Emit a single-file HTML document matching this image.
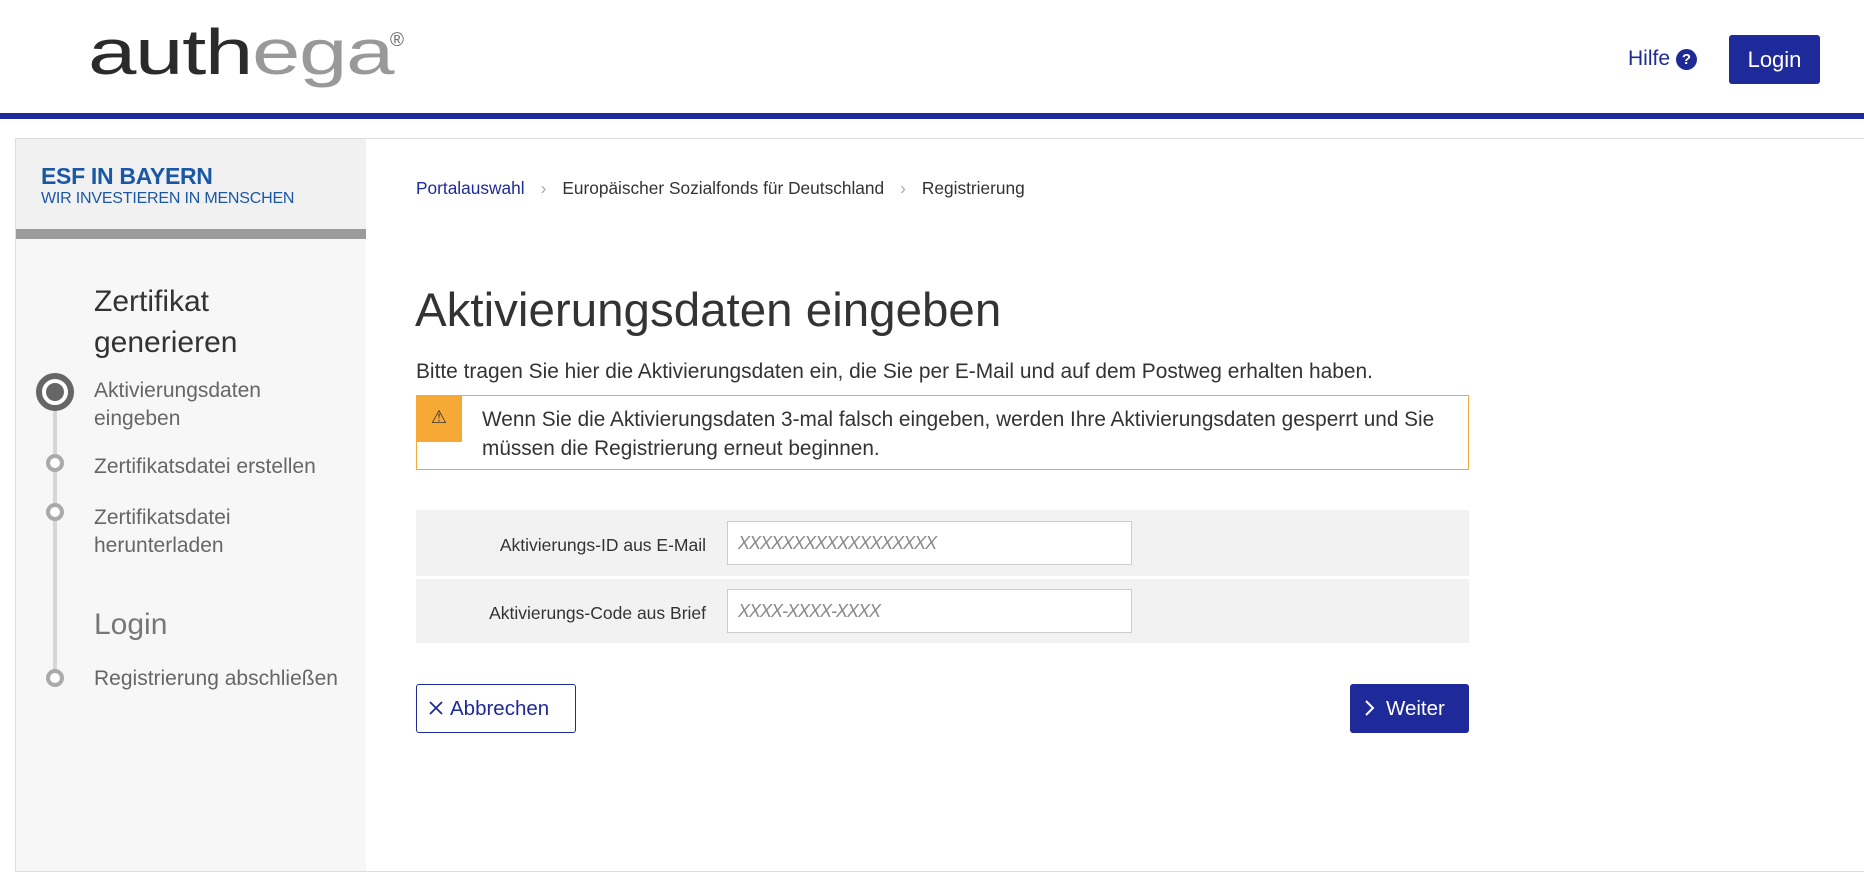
<!DOCTYPE html>
<html><head><meta charset="utf-8"><style>
*{box-sizing:border-box;margin:0;padding:0}
body{width:1864px;height:883px;background:#fff;font-family:"Liberation Sans",sans-serif;position:relative;overflow:hidden;color:#333}
.a{position:absolute;white-space:nowrap}
</style></head><body>
<div class="a" style="left:88px;top:20px;font-size:64px;letter-spacing:-1px;line-height:1;color:#2b2b2b;transform:scaleX(1.36);transform-origin:0 0">auth<span style="color:#999">ega</span></div>
<div class="a" style="left:390px;top:30px;font-size:19px;color:#666">®</div>
<div class="a" style="left:1628px;top:47px;font-size:21px;color:#1e2a96">Hilfe</div>
<div class="a" style="left:1676px;top:49px;width:21px;height:21px;border-radius:50%;background:#1e2a96;color:#fff;font-size:15px;font-weight:bold;text-align:center;line-height:21px">?</div>
<div class="a" style="left:1729px;top:35px;width:91px;height:49px;background:#1e2a9a;border-radius:3px;color:#fff;font-size:22px;text-align:center;line-height:49px">Login</div>
<div class="a" style="left:0;top:113px;width:1864px;height:6px;background:#1e2a9a"></div>
<div class="a" style="left:15px;top:138px;width:1849px;height:734px;border-top:1px solid #ddd;border-bottom:1px solid #ddd;border-left:1px solid #ddd"></div>
<div class="a" style="left:16px;top:139px;width:350px;height:732px;background:#f7f7f7"></div>
<div class="a" style="left:16px;top:139px;width:350px;height:90px;background:#f1f1f1"></div>
<div class="a" style="left:16px;top:229px;width:350px;height:10px;background:#9b9b9b"></div>
<div class="a" style="left:41px;top:163px;font-size:23px;font-weight:bold;color:#1a58a6;letter-spacing:-0.3px">ESF IN BAYERN</div>
<div class="a" style="left:41px;top:190px;font-size:16px;color:#1a58a6;letter-spacing:-0.2px">WIR INVESTIEREN IN MENSCHEN</div>
<div class="a" style="left:94px;top:281px;font-size:30px;line-height:41px;color:#333">Zertifikat<br>generieren</div>
<div class="a" style="left:53px;top:400px;width:4px;height:280px;background:#d6d6d6"></div>
<div class="a" style="left:36px;top:373px;width:38px;height:38px;border-radius:50%;border:6px solid #666;background:#fff"></div>
<div class="a" style="left:46px;top:383px;width:18px;height:18px;border-radius:50%;background:#666"></div>
<div class="a" style="left:94px;top:377px;font-size:21px;line-height:28px;color:#666">Aktivierungsdaten<br>eingeben</div>
<div class="a" style="left:46px;top:454px;width:18px;height:18px;border-radius:50%;border:4px solid #aaa;background:#fff"></div>
<div class="a" style="left:94px;top:455px;font-size:21px;color:#666">Zertifikatsdatei erstellen</div>
<div class="a" style="left:46px;top:503px;width:18px;height:18px;border-radius:50%;border:4px solid #aaa;background:#fff"></div>
<div class="a" style="left:94px;top:504px;font-size:21px;line-height:28px;color:#666">Zertifikatsdatei<br>herunterladen</div>
<div class="a" style="left:94px;top:608px;font-size:30px;color:#777">Login</div>
<div class="a" style="left:46px;top:669px;width:18px;height:18px;border-radius:50%;border:4px solid #aaa;background:#fff"></div>
<div class="a" style="left:94px;top:667px;font-size:21px;color:#666">Registrierung abschließen</div>

<div class="a" style="left:416px;top:178px;font-size:17.3px;color:#333"><span style="color:#1e2a96">Portalauswahl</span><span style="color:#aaa;margin:0 16px">›</span>Europäischer Sozialfonds für Deutschland<span style="color:#aaa;margin:0 16px">›</span>Registrierung</div>
<div class="a" style="left:415px;top:283px;font-size:47.5px;color:#333">Aktivierungsdaten eingeben</div>
<div class="a" style="left:416px;top:360px;font-size:20.9px;color:#333">Bitte tragen Sie hier die Aktivierungsdaten ein, die Sie per E-Mail und auf dem Postweg erhalten haben.</div>
<div class="a" style="left:416px;top:395px;width:1053px;height:75px;border:1px solid #f2a93b"></div>
<div class="a" style="left:416px;top:395px;width:46px;height:47px;background:#f7a935;text-align:center;line-height:45px;font-size:18px;color:#333">⚠</div>
<div class="a" style="left:482px;top:405px;font-size:20.8px;line-height:29px;color:#333">Wenn Sie die Aktivierungsdaten 3-mal falsch eingeben, werden Ihre Aktivierungsdaten gesperrt und Sie<br>müssen die Registrierung erneut beginnen.</div>
<div class="a" style="left:416px;top:510px;width:1053px;height:66px;background:#f2f2f2"></div>
<div class="a" style="left:416px;top:579px;width:1053px;height:64px;background:#f2f2f2"></div>
<div class="a" style="left:416px;top:535px;width:290px;text-align:right;font-size:17.5px;color:#333">Aktivierungs-ID aus E-Mail</div>
<div class="a" style="left:416px;top:603px;width:290px;text-align:right;font-size:17.5px;color:#333">Aktivierungs-Code aus Brief</div>
<div class="a" style="left:727px;top:521px;width:405px;height:44px;background:#fff;border:1px solid #ccc;padding-left:10px;line-height:42px;font-size:18px;font-style:italic;color:#888;letter-spacing:-1px">XXXXXXXXXXXXXXXXXX</div>
<div class="a" style="left:727px;top:589px;width:405px;height:44px;background:#fff;border:1px solid #ccc;padding-left:10px;line-height:42px;font-size:18px;font-style:italic;color:#888;letter-spacing:-1px">XXXX-XXXX-XXXX</div>
<div class="a" style="left:416px;top:684px;width:160px;height:49px;border:1px solid #1e2a9a;border-radius:3px;color:#1e2a9a;font-size:20.5px;line-height:47px;padding-left:11px">
<svg width="16" height="16" viewBox="0 0 16 16" style="vertical-align:-1px;margin-right:6px"><path d="M2 2L14 14M14 2L2 14" stroke="#1e2a9a" stroke-width="1.8"/></svg>Abbrechen</div>
<div class="a" style="left:1350px;top:684px;width:119px;height:49px;background:#1e2a9a;border-radius:3px;color:#fff;font-size:20.5px;line-height:49px;padding-left:14px">
<svg width="12" height="18" viewBox="0 0 12 18" style="vertical-align:-2px;margin-right:10px"><path d="M2 2L9 9L2 16" stroke="#fff" stroke-width="2" fill="none"/></svg>Weiter</div>
</body></html>
